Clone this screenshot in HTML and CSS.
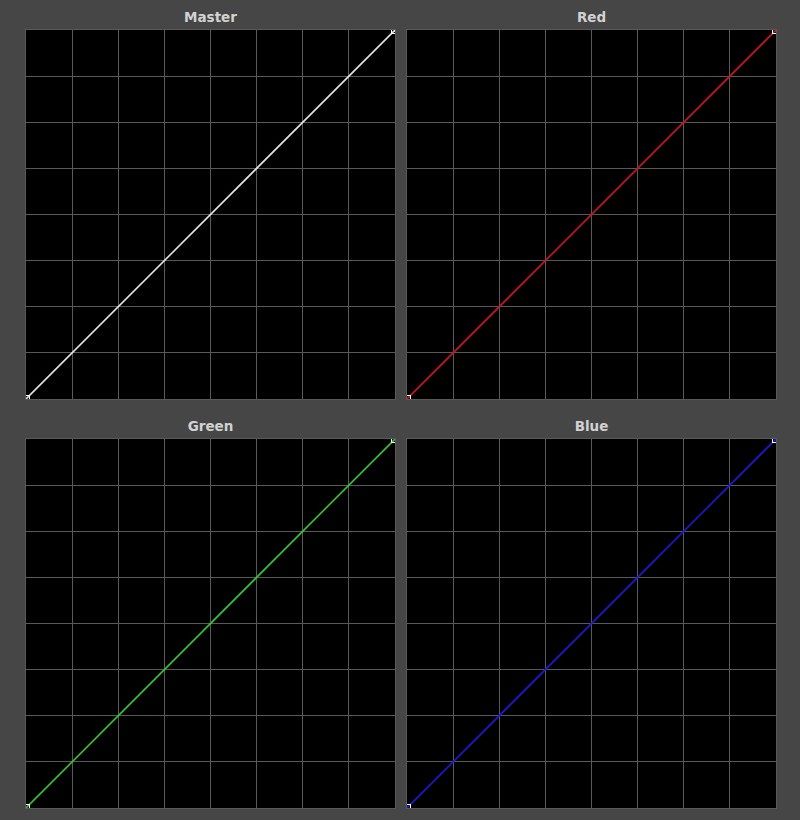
FILE: index.html
```
<!DOCTYPE html>
<html>
<head>
<meta charset="utf-8">
<link rel="stylesheet" href="styles.css">
</head>
<body>
<div class="grid">
  <div class="panel">
    <div class="title">Master</div>
    <div class="chart">
      <svg class="plot" width="100%" height="100%">
        <g class="gridlines">
          <line x1="12.5%" y1="0" x2="12.5%" y2="100%"/><line x1="25%" y1="0" x2="25%" y2="100%"/><line x1="37.5%" y1="0" x2="37.5%" y2="100%"/><line x1="50%" y1="0" x2="50%" y2="100%"/><line x1="62.5%" y1="0" x2="62.5%" y2="100%"/><line x1="75%" y1="0" x2="75%" y2="100%"/><line x1="87.5%" y1="0" x2="87.5%" y2="100%"/>
          <line y1="12.5%" x1="0" y2="12.5%" x2="100%"/><line y1="25%" x1="0" y2="25%" x2="100%"/><line y1="37.5%" x1="0" y2="37.5%" x2="100%"/><line y1="50%" x1="0" y2="50%" x2="100%"/><line y1="62.5%" x1="0" y2="62.5%" x2="100%"/><line y1="75%" x1="0" y2="75%" x2="100%"/><line y1="87.5%" x1="0" y2="87.5%" x2="100%"/>
        </g>
        <line class="curve master" x1="0" y1="100%" x2="100%" y2="0"/>
      </svg>
      <div class="knob bl"></div><div class="knob tr"></div>
    </div>
  </div>
  <div class="panel">
    <div class="title">Red</div>
    <div class="chart">
      <svg class="plot" width="100%" height="100%">
        <g class="gridlines">
          <line x1="12.5%" y1="0" x2="12.5%" y2="100%"/><line x1="25%" y1="0" x2="25%" y2="100%"/><line x1="37.5%" y1="0" x2="37.5%" y2="100%"/><line x1="50%" y1="0" x2="50%" y2="100%"/><line x1="62.5%" y1="0" x2="62.5%" y2="100%"/><line x1="75%" y1="0" x2="75%" y2="100%"/><line x1="87.5%" y1="0" x2="87.5%" y2="100%"/>
          <line y1="12.5%" x1="0" y2="12.5%" x2="100%"/><line y1="25%" x1="0" y2="25%" x2="100%"/><line y1="37.5%" x1="0" y2="37.5%" x2="100%"/><line y1="50%" x1="0" y2="50%" x2="100%"/><line y1="62.5%" x1="0" y2="62.5%" x2="100%"/><line y1="75%" x1="0" y2="75%" x2="100%"/><line y1="87.5%" x1="0" y2="87.5%" x2="100%"/>
        </g>
        <line class="curve red" x1="0" y1="100%" x2="100%" y2="0"/>
      </svg>
      <div class="knob bl"></div><div class="knob tr"></div>
    </div>
  </div>
  <div class="panel">
    <div class="title">Green</div>
    <div class="chart">
      <svg class="plot" width="100%" height="100%">
        <g class="gridlines">
          <line x1="12.5%" y1="0" x2="12.5%" y2="100%"/><line x1="25%" y1="0" x2="25%" y2="100%"/><line x1="37.5%" y1="0" x2="37.5%" y2="100%"/><line x1="50%" y1="0" x2="50%" y2="100%"/><line x1="62.5%" y1="0" x2="62.5%" y2="100%"/><line x1="75%" y1="0" x2="75%" y2="100%"/><line x1="87.5%" y1="0" x2="87.5%" y2="100%"/>
          <line y1="12.5%" x1="0" y2="12.5%" x2="100%"/><line y1="25%" x1="0" y2="25%" x2="100%"/><line y1="37.5%" x1="0" y2="37.5%" x2="100%"/><line y1="50%" x1="0" y2="50%" x2="100%"/><line y1="62.5%" x1="0" y2="62.5%" x2="100%"/><line y1="75%" x1="0" y2="75%" x2="100%"/><line y1="87.5%" x1="0" y2="87.5%" x2="100%"/>
        </g>
        <line class="curve green" x1="0" y1="100%" x2="100%" y2="0"/>
      </svg>
      <div class="knob bl"></div><div class="knob tr"></div>
    </div>
  </div>
  <div class="panel">
    <div class="title">Blue</div>
    <div class="chart">
      <svg class="plot" width="100%" height="100%">
        <g class="gridlines">
          <line x1="12.5%" y1="0" x2="12.5%" y2="100%"/><line x1="25%" y1="0" x2="25%" y2="100%"/><line x1="37.5%" y1="0" x2="37.5%" y2="100%"/><line x1="50%" y1="0" x2="50%" y2="100%"/><line x1="62.5%" y1="0" x2="62.5%" y2="100%"/><line x1="75%" y1="0" x2="75%" y2="100%"/><line x1="87.5%" y1="0" x2="87.5%" y2="100%"/>
          <line y1="12.5%" x1="0" y2="12.5%" x2="100%"/><line y1="25%" x1="0" y2="25%" x2="100%"/><line y1="37.5%" x1="0" y2="37.5%" x2="100%"/><line y1="50%" x1="0" y2="50%" x2="100%"/><line y1="62.5%" x1="0" y2="62.5%" x2="100%"/><line y1="75%" x1="0" y2="75%" x2="100%"/><line y1="87.5%" x1="0" y2="87.5%" x2="100%"/>
        </g>
        <line class="curve blue" x1="0" y1="100%" x2="100%" y2="0"/>
      </svg>
      <div class="knob bl"></div><div class="knob tr"></div>
    </div>
  </div>
</div>
</body>
</html>
```
FILE: styles.css
```
html, body {
  margin: 0;
  padding: 0;
  background: #464646;
  width: 800px;
  height: 820px;
  overflow: hidden;
}
.grid {
  display: grid;
  grid-template-columns: 371px 371px;
  column-gap: 10px;
  row-gap: 9px;
  padding: 0 23px 0 25px;
}
.panel {
  display: flex;
  flex-direction: column;
}
.title {
  height: 29px;
  display: flex;
  align-items: center;
  justify-content: center;
  padding-top: 4px;
  box-sizing: border-box;
  font-family: "DejaVu Sans", sans-serif;
  font-weight: bold;
  font-size: 13.5px;
  color: #d2d2d2;
}
.chart {
  position: relative;
  height: 371px;
  background: #000;
  border: 1px solid #595959;
  box-sizing: border-box;
  overflow: hidden;
}
.plot {
  display: block;
}
.gridlines line {
  stroke: #595959;
  stroke-width: 1;
  shape-rendering: crispEdges;
}
.curve {
  stroke-width: 1.6;
}
.curve.master { stroke: #e4e4e4; }
.curve.red { stroke: #d0141e; }
.curve.green { stroke: #34c82a; }
.curve.blue { stroke: #1a1ad8; }
.knob {
  position: absolute;
  width: 7px;
  height: 7px;
  border: 1.5px solid #ffffff;
  box-sizing: border-box;
}
.knob.bl { left: -3px; bottom: -3px; }
.knob.tr { right: -3px; top: -3px; }
```
